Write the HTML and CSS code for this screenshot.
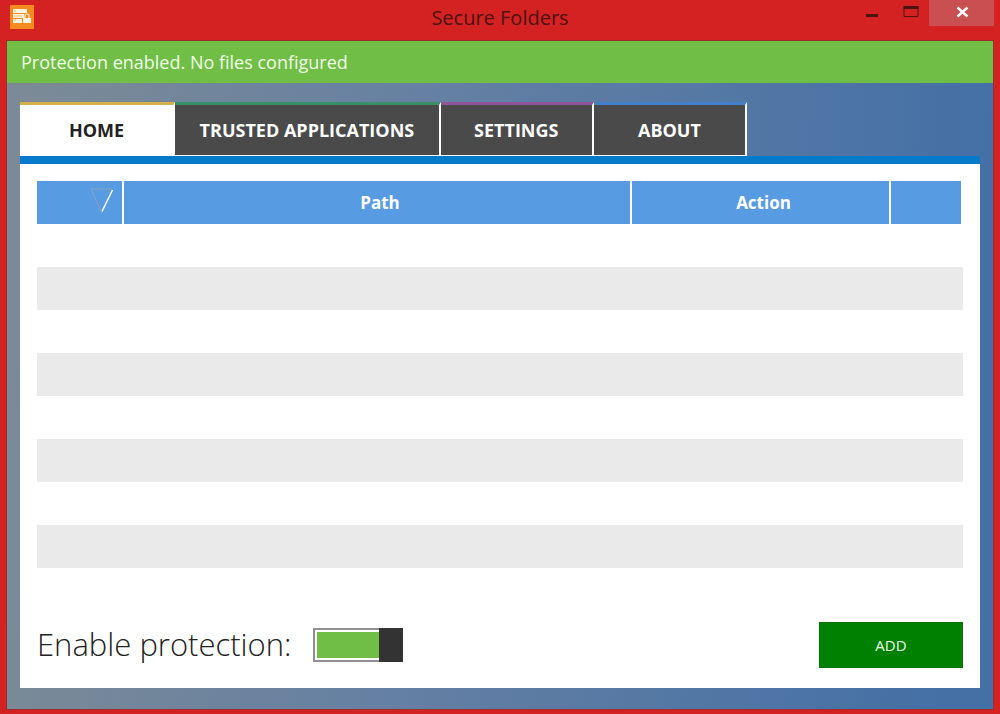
FILE: index.html
```html
<!DOCTYPE html>
<html lang="en">
<head>
<meta charset="utf-8">
<title>Secure Folders</title>
<link rel="stylesheet" href="styles.css">
</head>
<body>
<div class="window">
  <header class="titlebar">
    <svg class="app-icon" viewBox="0 0 24 24" aria-hidden="true">
      <rect width="24" height="24" fill="#f58a1f"/>
      <path d="M3 4h14v4H3zM3 9h11l1 4H3zM3 14h9v4H3z" fill="#fff4e4"/>
      <path d="M4 6h2M4 11h8M4 15h2" stroke="#f7b266" fill="none"/>
      <path d="M15 13v-2a2 2 0 0 1 4 0v2" fill="none" stroke="#fbd3a0" stroke-width="1.500"/>
      <rect x="13" y="13" width="8" height="5" fill="#fff4e4"/>
    </svg>
    <h1 class="title">Secure Folders</h1>
    <div class="controls">
      <button class="control" type="button" aria-label="Minimize">
        <svg viewBox="0 0 38 26"><path d="M13 15.500h12" stroke="#4b1414" stroke-width="3"/></svg>
      </button>
      <button class="control" type="button" aria-label="Maximize">
        <svg viewBox="0 0 38 26"><path d="M12.500 7.500h15" stroke="#4b1414" stroke-width="3"/><path d="M13 7v9.500h14V7" fill="none" stroke="#4b1414"/></svg>
      </button>
      <button class="control control-close" type="button" aria-label="Close">
        <svg viewBox="0 0 65 26"><path d="M28.500 7.500l10 9M38.500 7.500l-10 9" stroke="#fff" stroke-width="2.400"/></svg>
      </button>
    </div>
  </header>
  <main class="client">
    <p class="status">Protection enabled. No files configured</p>
    <div class="workspace">
      <nav class="tabs" role="tablist">
        <button class="tab tab-home" type="button" role="tab" aria-selected="true">HOME</button>
        <button class="tab tab-trusted" type="button" role="tab">TRUSTED APPLICATIONS</button>
        <button class="tab tab-settings" type="button" role="tab">SETTINGS</button>
        <button class="tab tab-about" type="button" role="tab">ABOUT</button>
      </nav>
      <section class="panel">
        <table class="files">
          <colgroup><col class="col-sort"><col><col class="col-action"><col class="col-end"></colgroup>
          <thead>
            <tr>
              <th class="sort" aria-label="Sort"><svg class="sort-icon" viewBox="0 0 24 26"><path d="M22 1H1l11 24" fill="none" stroke="#8aa5bd"/><path d="M12 23.500L22.500 2" fill="none" stroke="#fff" stroke-width="1.500"/></svg></th>
              <th>Path</th>
              <th>Action</th>
              <th></th>
            </tr>
          </thead>
          <tbody>
            <tr><td colspan="4"></td></tr>
            <tr><td colspan="4"></td></tr>
            <tr><td colspan="4"></td></tr>
            <tr><td colspan="4"></td></tr>
            <tr><td colspan="4"></td></tr>
            <tr><td colspan="4"></td></tr>
            <tr><td colspan="4"></td></tr>
            <tr><td colspan="4"></td></tr>
          </tbody>
        </table>
        <footer class="actions">
          <label class="protect-label" for="protect">Enable protection:</label>
          <input class="switch" id="protect" type="checkbox" role="switch" checked>
          <button class="add" type="button">ADD</button>
        </footer>
      </section>
    </div>
  </main>
</div>
</body>
</html>
```
FILE: styles.css
```css
* { box-sizing: border-box; }

body {
  margin: 0;
  font-family: "Open Sans", "Noto Sans", sans-serif;
  color: #222;
}

button { font-family: inherit; }

.window {
  display: flex;
  flex-direction: column;
  min-height: 100vh;
  padding: 0 6px 4px;
  background: #d42222;
}

.titlebar {
  display: grid;
  grid-template-columns: 1fr auto 1fr;
  align-items: start;
  height: 40px;
}

.app-icon {
  width: 24px;
  height: 24px;
  margin: 5px 0 0 4px;
}

.title {
  margin: 6px 0 0;
  font-size: 20px;
  font-weight: 400;
  line-height: 24px;
  color: #4d1212;
}

.controls {
  display: flex;
  justify-content: flex-end;
}

.control {
  width: 38px;
  height: 26px;
  padding: 0;
  border: 0;
  background: none;
}

.control svg { display: block; width: 100%; height: 100%; }

.control-close {
  width: 65px;
  background: #c94f50;
}

.client {
  flex: 1;
  display: flex;
  flex-direction: column;
  border: 1px solid #a02c2c;
  background: linear-gradient(95deg, #7b8a96 3%, #6781a2 38%, #4470a6 95%);
}

.status {
  margin: 0;
  padding: 0 14px;
  font-size: 18px;
  line-height: 42px;
  color: #f0ffe6;
  background: #70be46;
}

.workspace {
  flex: 1;
  display: flex;
  flex-direction: column;
  padding: 19px 13px 21px;
}

.tabs {
  display: flex;
  width: 727px;
  max-width: 100%;
}

.tab {
  flex: 152 1 0;
  height: 54px;
  padding: 0;
  border: 0 solid #fff;
  border-top: 3px solid;
  border-right: 2px solid #fff;
  border-bottom: 1px solid #fff;
  font-size: 18px;
  font-weight: 700;
  line-height: 24px;
  color: #fff;
  background: #4a4a4a;
}

.tab-home {
  flex-grow: 154;
  border-top-color: #d3b048;
  color: #222;
  background: #fff;
}

.tab-trusted { flex-grow: 265; border-top-color: #389068; }
.tab-settings { border-top-color: #90549a; }
.tab-about { border-top-color: #4080cc; }

.panel {
  flex: 1;
  display: flex;
  flex-direction: column;
  padding: 17px 17px 20px;
  border-top: 8px solid #067aca;
  background: #fff;
}

.files {
  width: 100%;
  table-layout: fixed;
  border-collapse: separate;
  border-spacing: 0;
}

.col-sort { width: 87px; }
.col-action { width: 259px; }
.col-end { width: 72px; }

.files th {
  height: 43px;
  padding: 0 0 0 6px;
  border-right: 2px solid #fff;
  font-size: 17px;
  line-height: 24px;
  color: #fff;
  background: #579be2;
}

.files td { height: 43px; padding: 0; }
.files tr:nth-child(even) td { background: #eaeaea; }

.files .sort {
  padding: 0 8px 4px 0;
  text-align: right;
}

.sort-icon {
  display: inline-block;
  width: 24px;
  height: 26px;
  vertical-align: middle;
}

.actions {
  display: flex;
  align-items: center;
  margin-top: auto;
}

.protect-label {
  padding-bottom: 2px;
  font-size: 31px;
  font-weight: 300;
  line-height: 44px;
}

.switch {
  appearance: none;
  width: 90px;
  height: 34px;
  margin: 0 0 0 22px;
  background:
    linear-gradient(#333, #333) right / 24px 100% no-repeat,
    linear-gradient(#70be46, #70be46) 4px 4px / 64px 26px no-repeat,
    linear-gradient(#fff, #fff) 2px 2px / 66px 30px no-repeat,
    #909090;
}

.switch:not(:checked) {
  background:
    linear-gradient(#333, #333) left / 24px 100% no-repeat,
    #909090;
}

.add {
  width: 144px;
  height: 46px;
  margin-left: auto;
  padding: 0;
  border: 1px solid #087208;
  font-size: 15px;
  color: #e4ffe4;
  background: #008000;
}
```
